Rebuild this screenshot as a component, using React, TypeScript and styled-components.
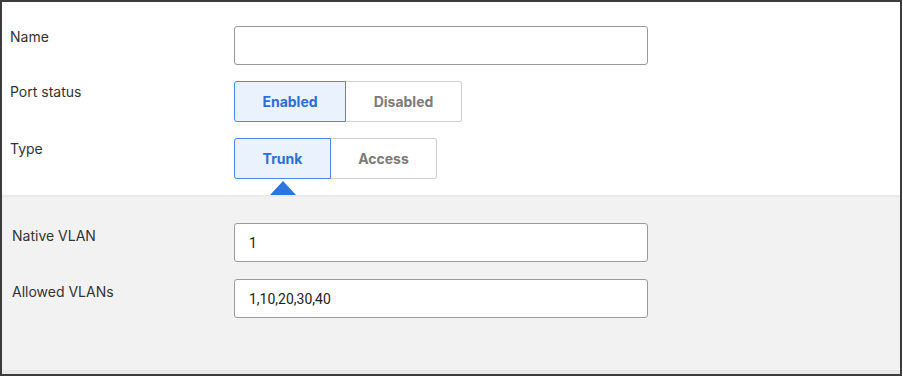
import React from "react";
import styled, { createGlobalStyle } from "styled-components";

const Global = createGlobalStyle`
  html, body { margin: 0; padding: 0; background: #ffffff; }
  * { box-sizing: border-box; }
`;

const Frame = styled.div`
  width: 902px;
  height: 376px;
  border: 2px solid #3c3c3c;
  display: flex;
  flex-direction: column;
  font-family: Inter, "Liberation Sans", sans-serif;
  overflow: hidden;
`;

const TopSection = styled.section`
  background: #ffffff;
  padding: 24px 0 16px 8px;
  display: flex;
  flex-direction: column;
  gap: 16px;
`;

const BottomSection = styled.section`
  flex: 1;
  background: #f2f2f2;
  padding: 28px 0 0 10px;
  display: flex;
  flex-direction: column;
  gap: 17px;
  box-shadow: inset 0 2px 2px rgba(0, 0, 0, 0.04);
  border-bottom: 4px solid #e9e9e9;
`;

const Row = styled.div<{ $labelWidth: number }>`
  display: grid;
  grid-template-columns: ${(p) => p.$labelWidth}px auto;
  align-items: start;
`;

const Label = styled.label<{ $offset?: number }>`
  font-size: 14px;
  line-height: 22px;
  color: #333333;
  margin-top: ${(p) => p.$offset ?? 0}px;
`;

const TextInput = styled.input`
  width: 414px;
  height: 39px;
  border: 1px solid #9b9b9b;
  border-radius: 3px;
  background: #ffffff;
  padding: 0 14px;
  font-family: Roboto, "Liberation Sans", sans-serif;
  font-size: 14px;
  color: #222222;
  outline: none;
`;

const Segmented = styled.div`
  display: inline-flex;
  height: 41px;
`;

const Segment = styled.button<{ $active?: boolean; $width: number }>`
  position: relative;
  width: ${(p) => p.$width}px;
  height: 100%;
  margin: 0;
  font-family: Inter, "Liberation Sans", sans-serif;
  font-size: 14px;
  font-weight: 700;
  cursor: pointer;
  color: ${(p) => (p.$active ? "#2a6fd8" : "#7b7b7b")};
  background: ${(p) => (p.$active ? "#eaf2fe" : "#ffffff")};
  border: ${(p) => (p.$active ? "1.5px solid #4a8aef" : "1px solid #cfcfcf")};
  ${(p) => (p.$active ? "" : "border-left: none;")}
  &:first-child { border-radius: 3px 0 0 3px; }
  &:last-child { border-radius: 0 3px 3px 0; }
`;

const Pointer = styled.span`
  position: absolute;
  left: 50%;
  bottom: -17px;
  transform: translateX(-50%);
  width: 0;
  height: 0;
  border-left: 13px solid transparent;
  border-right: 13px solid transparent;
  border-bottom: 14px solid #2b74e2;
`;

export default function App() {
  return (
    <>
      <Global />
      <Frame>
        <TopSection>
          <Row $labelWidth={224}>
            <Label>Name</Label>
            <TextInput defaultValue="" />
          </Row>
          <Row $labelWidth={224}>
            <Label>Port status</Label>
            <Segmented>
              <Segment $active $width={112}>Enabled</Segment>
              <Segment $width={116}>Disabled</Segment>
            </Segmented>
          </Row>
          <Row $labelWidth={224}>
            <Label>Type</Label>
            <Segmented>
              <Segment $active $width={97}>
                Trunk
                <Pointer />
              </Segment>
              <Segment $width={106}>Access</Segment>
            </Segmented>
          </Row>
        </TopSection>
        <BottomSection>
          <Row $labelWidth={222}>
            <Label $offset={2}>Native VLAN</Label>
            <TextInput defaultValue="1" />
          </Row>
          <Row $labelWidth={222}>
            <Label $offset={2}>Allowed VLANs</Label>
            <TextInput defaultValue="1,10,20,30,40" />
          </Row>
        </BottomSection>
      </Frame>
    </>
  );
}
